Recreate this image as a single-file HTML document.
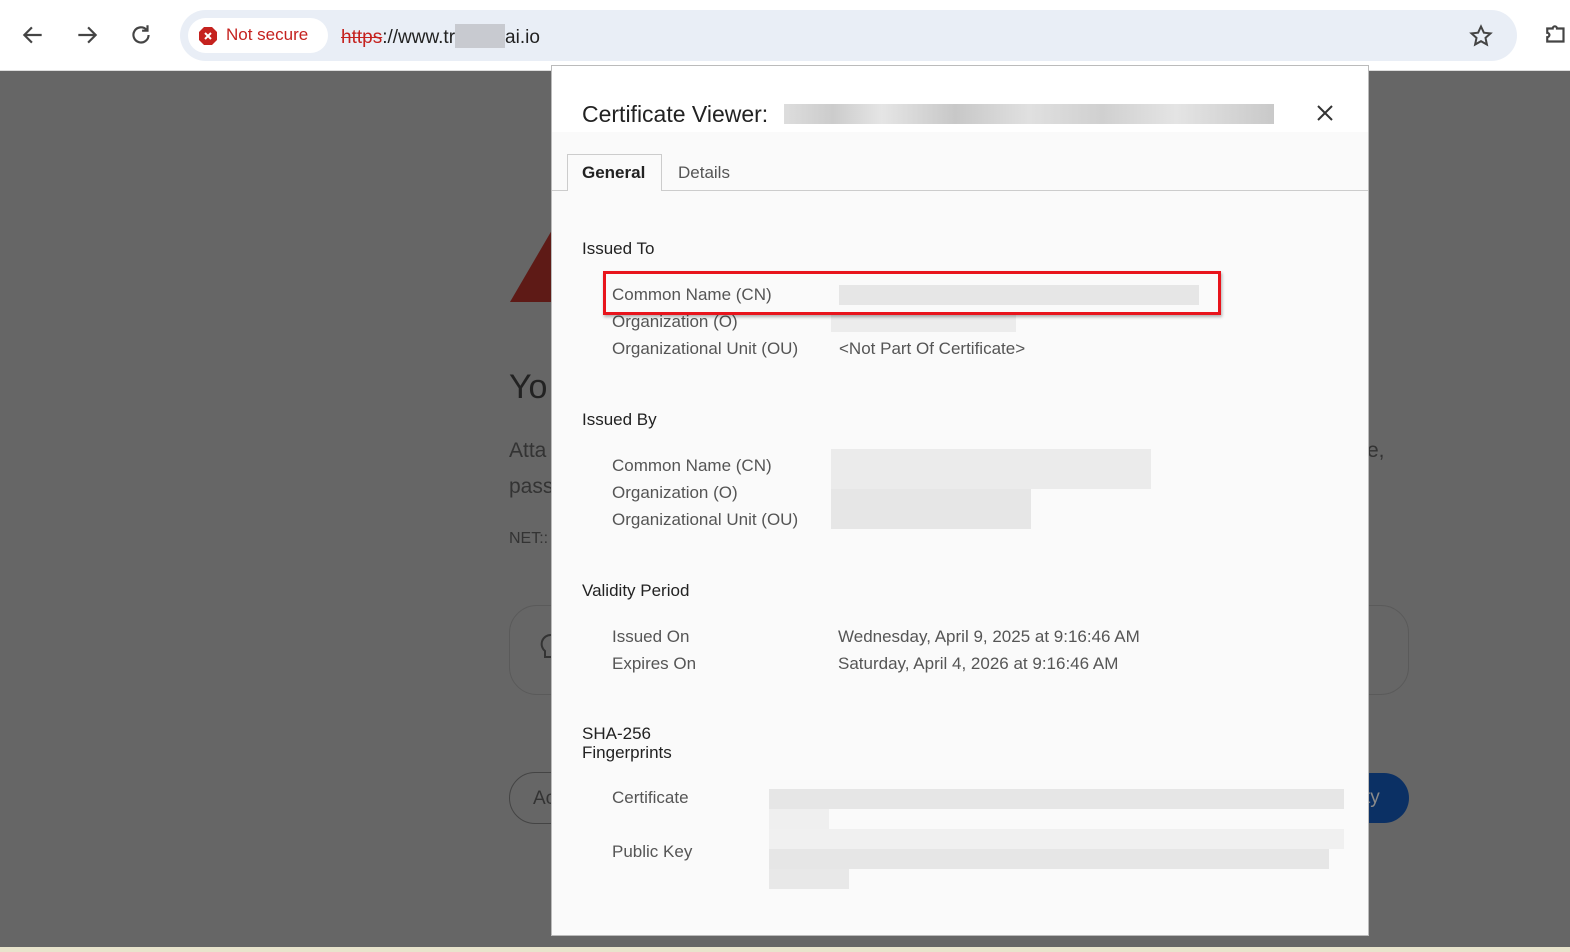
<!DOCTYPE html>
<html><head><meta charset="utf-8"><style>
*{margin:0;padding:0;box-sizing:border-box}
body{width:1570px;height:952px;overflow:hidden;background:#666;font-family:"Liberation Sans","DejaVu Sans",sans-serif;position:relative}
.top{position:absolute;left:0;top:0;width:1570px;height:71px;background:#fff;border-bottom:1px solid #ddd}
.omni{position:absolute;left:180px;top:10px;width:1337px;height:51px;background:#e9eef6;border-radius:26px}
.chip{position:absolute;left:188px;top:18px;width:140px;height:35px;background:#fff;border-radius:18px}
.a{position:absolute}
.dlg{position:absolute;left:551px;top:65px;width:818px;height:871px;background:#fafafa;border:1px solid #bbb}
.hdr{position:absolute;left:0;top:0;width:816px;height:66px;background:#fff}
.t{position:absolute;font-size:17px;color:#222;white-space:nowrap}
.l{color:#555}
.blur{position:absolute;background:#e6e6e6}
</style></head><body>
<div class="top"></div>
<div class="omni"></div>
<div class="chip"></div>
<svg class="a" style="left:20px;top:22px" width="26" height="26" viewBox="0 0 24 24" fill="none" stroke="#444" stroke-width="2"><path d="M20 12H5M11 5l-7 7 7 7"/></svg>
<svg class="a" style="left:74px;top:22px" width="26" height="26" viewBox="0 0 24 24" fill="none" stroke="#444" stroke-width="2"><path d="M4 12h15M13 5l7 7-7 7"/></svg>
<svg class="a" style="left:128px;top:22px" width="26" height="26" viewBox="0 0 24 24" fill="none" stroke="#444" stroke-width="2"><path d="M19 12a7 7 0 1 1-2-5"/><path d="M18 3v5h-5"/></svg>
<svg class="a" style="left:199px;top:27px" width="18" height="18" viewBox="0 0 18 18"><polygon points="5,0 13,0 18,5 18,13 13,18 5,18 0,13 0,5" fill="#c5221f"/><path d="M6 6l6 6M12 6l-6 6" stroke="#fff" stroke-width="2"/></svg>
<div class="t" style="left:226px;top:25px;color:#c5221f;font-size:17px">Not secure</div>
<div class="t" style="left:341px;top:24px;font-size:19px;color:#222"><span style="color:#c5221f;text-decoration:line-through">https</span>://www.tr<span style="display:inline-block;width:50px;height:24px;background:#c8cad0;vertical-align:-5px"></span>ai.io</div>
<svg class="a" style="left:1469px;top:24px" width="24" height="24" viewBox="0 0 24 24" fill="none" stroke="#444" stroke-width="2"><path d="M12 2.5l2.9 6.2 6.6.7-5 4.5 1.4 6.6L12 17.2 6.1 20.5l1.4-6.6-5-4.5 6.6-.7z"/></svg>
<svg class="a" style="left:1544px;top:22px" width="26" height="26" viewBox="0 0 24 24" fill="none" stroke="#444" stroke-width="2"><path d="M3 6h5a2 2 0 0 1 4 0h6v12H3v-4a2 2 0 0 0 0-4z"/></svg>
<div class="a" style="left:510px;top:230px;width:0;height:0;border-left:42px solid transparent;border-bottom:72px solid #5e1a16"></div>
<div class="t" style="left:509px;top:368px;font-size:34px;color:#222">Yo</div>
<div class="t" style="left:509px;top:439px;font-size:21px;color:#333">Atta</div>
<div class="t" style="left:509px;top:475px;font-size:21px;color:#333">pass</div>
<div class="t" style="left:1367px;top:439px;font-size:21px;color:#333">e,</div>
<div class="t" style="left:509px;top:530px;font-size:16px;color:#333">NET::</div>
<div class="a" style="left:509px;top:605px;width:900px;height:90px;border:1px solid #5a5a5a;border-radius:28px"></div>
<svg class="a" style="left:535px;top:633px" width="16" height="32" viewBox="0 0 16 32" fill="none" stroke="#333" stroke-width="2"><path d="M16 2a9 9 0 0 0-6 16v6h6"/></svg>
<div class="a" style="left:509px;top:772px;width:100px;height:52px;border:1px solid #444;border-radius:26px"></div>
<div class="t" style="left:533px;top:788px;font-size:19px;color:#333">Ac</div>
<div class="a" style="left:1300px;top:773px;width:109px;height:50px;background:#0b3064;border-radius:25px"></div>
<div class="t" style="left:1365px;top:787px;font-size:19px;color:#8a8a8a">ty</div>
<div class="a" style="left:0;top:947px;width:1570px;height:5px;background:#e8e4cc"></div>
<div class="dlg">
<div class="hdr"></div>
<div class="t" style="left:30px;top:35px;font-size:23px;color:#222">Certificate Viewer:</div>
<div class="blur" style="left:232px;top:38px;width:490px;height:20px;background:linear-gradient(90deg,#ddd,#ccc 10%,#e5e5e5 20%,#c8c8c8 35%,#e0e0e0 50%,#d0d0d0 65%,#e4e4e4 80%,#c9c9c9)"></div>
<svg class="a" style="left:763px;top:37px" width="20" height="20" viewBox="0 0 20 20" stroke="#333" stroke-width="2"><path d="M3 3l14 14M17 3L3 17"/></svg>
<div class="a" style="left:0;top:124px;width:816px;height:1px;background:#ccc"></div>
<div class="a" style="left:15px;top:88px;width:95px;height:37px;background:#fafafa;border:1px solid #ccc;border-bottom:none"></div>
<div class="t" style="left:30px;top:97px;font-weight:bold;font-size:17px">General</div>
<div class="t l" style="left:126px;top:97px">Details</div>
<div class="t" style="left:30px;top:173px">Issued To</div>
<div class="t l" style="left:60px;top:219px">Common Name (CN)</div>
<div class="blur" style="left:287px;top:219px;width:360px;height:20px"></div>
<div class="t l" style="left:60px;top:246px">Organization (O)</div>
<div class="blur" style="left:279px;top:248px;width:185px;height:18px;background:#ececec"></div>
<div class="t l" style="left:60px;top:273px">Organizational Unit (OU)</div>
<div class="t l" style="left:287px;top:273px">&lt;Not Part Of Certificate&gt;</div>
<div class="a" style="left:51px;top:205px;width:618px;height:44px;border:3px solid #e8141c;box-shadow:1px 2px 3px rgba(0,0,0,.3)"></div>
<div class="t" style="left:30px;top:344px">Issued By</div>
<div class="t l" style="left:60px;top:390px">Common Name (CN)</div>
<div class="t l" style="left:60px;top:417px">Organization (O)</div>
<div class="t l" style="left:60px;top:444px">Organizational Unit (OU)</div>
<div class="blur" style="left:279px;top:383px;width:320px;height:40px;background:#ebebeb"></div>
<div class="blur" style="left:279px;top:423px;width:200px;height:40px;background:#e6e6e6"></div>
<div class="t" style="left:30px;top:515px">Validity Period</div>
<div class="t l" style="left:60px;top:561px">Issued On</div>
<div class="t l" style="left:60px;top:588px">Expires On</div>
<div class="t l" style="left:286px;top:561px">Wednesday, April 9, 2025 at 9:16:46 AM</div>
<div class="t l" style="left:286px;top:588px">Saturday, April 4, 2026 at 9:16:46 AM</div>
<div class="t" style="left:30px;top:658px;line-height:19px">SHA-256<br>Fingerprints</div>
<div class="t l" style="left:60px;top:722px">Certificate</div>
<div class="t l" style="left:60px;top:776px">Public Key</div>
<div class="blur" style="left:217px;top:723px;width:575px;height:20px"></div>
<div class="blur" style="left:217px;top:743px;width:60px;height:20px;background:#efefef"></div>
<div class="blur" style="left:217px;top:763px;width:575px;height:20px;background:#f0f0f0"></div>
<div class="blur" style="left:217px;top:783px;width:560px;height:20px"></div>
<div class="blur" style="left:217px;top:803px;width:80px;height:20px;background:#e8e8e8"></div>
</div>
</body></html>
